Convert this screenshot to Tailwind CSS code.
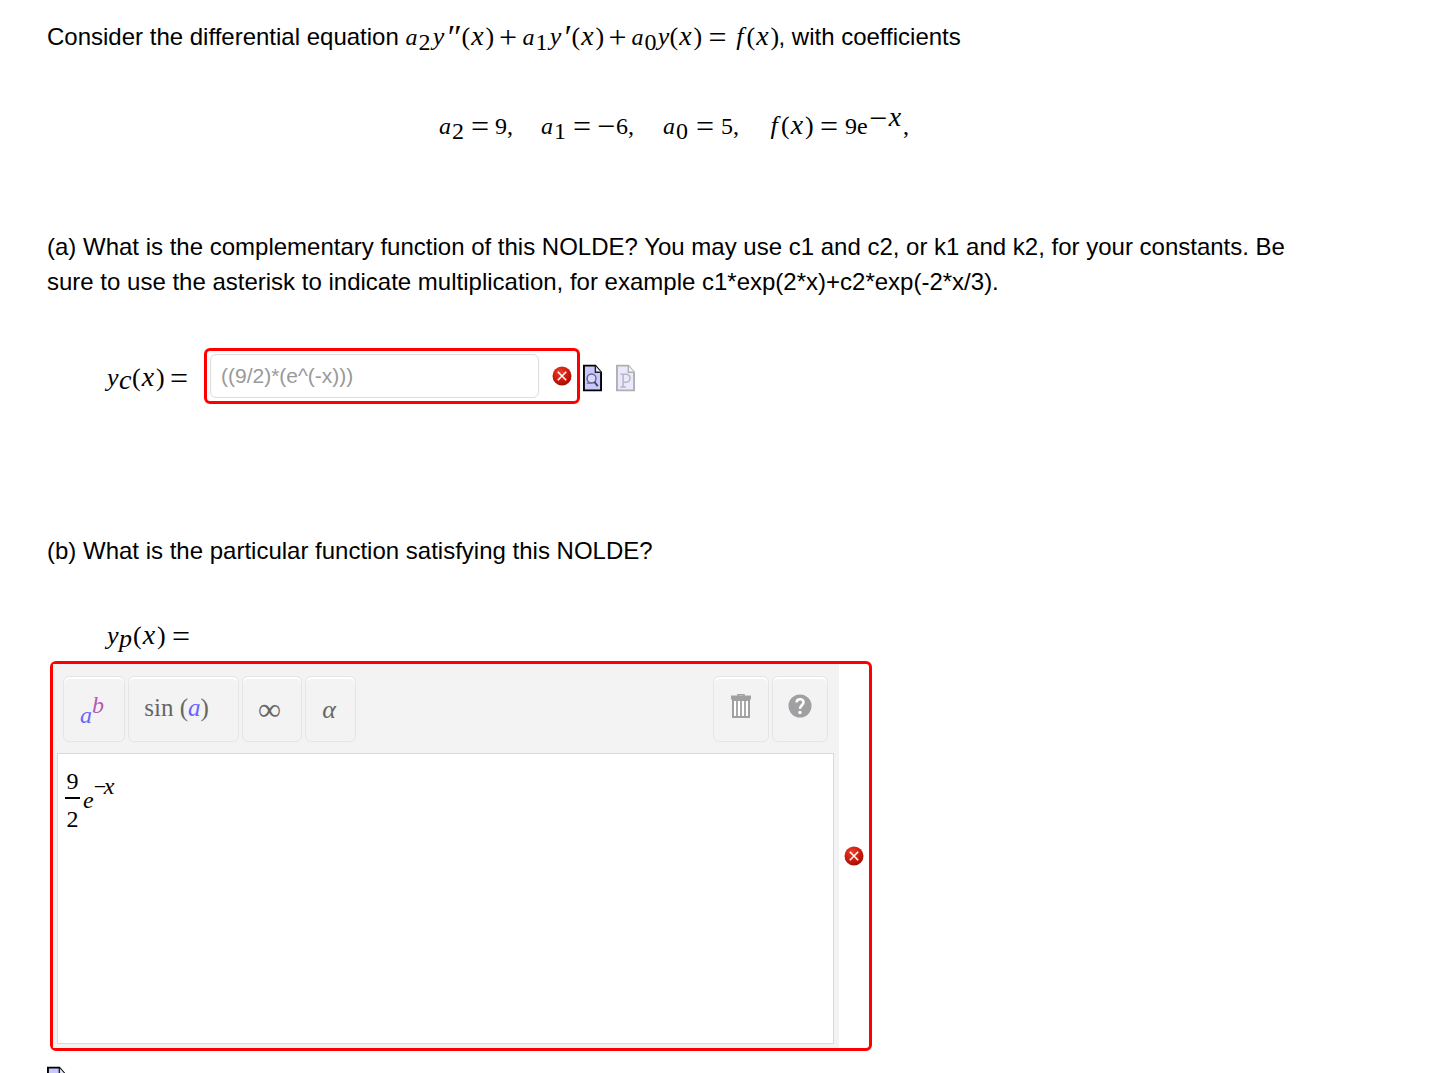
<!DOCTYPE html>
<html lang="en">
<head>
<meta charset="utf-8">
<meta name="viewport" content="width=device-width, initial-scale=1">
<title>Differential equation question</title>
<script src="https://cdn.jsdelivr.net/npm/@tailwindcss/browser@4"></script>
</head>
<body class="h-screen overflow-hidden bg-white font-['Liberation_Sans',Arial,sans-serif] text-[24px] leading-[35px] text-black">
<svg class="absolute h-0 w-0" aria-hidden="true">
  <defs>
    <radialGradient id="red" cx="40%" cy="30%" r="75%"><stop offset="0" stop-color="#e9402c"/><stop offset=".6" stop-color="#cc1808"/><stop offset="1" stop-color="#9b0c04"/></radialGradient>
    <symbol id="wrong" viewBox="0 0 20 20"><circle cx="10" cy="10" r="9.5" fill="url(#red)"/><path d="M5.8 5.8l8.4 8.4M14.2 5.8l-8.4 8.4" stroke="#fff" stroke-width="1.6"/></symbol>
    <symbol id="preview" viewBox="0 0 20 28"><path d="M1 1h12l6 7v19H1z" fill="#c8c8ff" stroke="#000" stroke-width="2"/><path d="M13 1v7h6" fill="#e8e8ff" stroke="#222" stroke-width="1.5"/><circle cx="9" cy="14.5" r="4.700" fill="#d8d8ff" stroke="#62628a" stroke-width="1.500"/><path d="M12 18l3.500 4.500" stroke="#44445e" stroke-width="2"/><path d="M4 19.500h5" stroke="#77779a" stroke-width="1.500"/></symbol>
  </defs>
</svg>
<main class="mr-[152px] ml-[47px] pt-[19px]">
  <p class="h-[35px] whitespace-nowrap">Consider the differential equation
    <span class="inline-flex items-baseline align-baseline font-['Liberation_Serif',serif] leading-[24px]"><i class="w-[13px]">a</i><span class="relative top-[5px] w-[13px]">2</span><i class="w-[14px] text-center text-[26px]">y</i><i class="relative top-[3px] w-[16px] text-[34px]">″</i><span class="w-[8px] text-[26px]">(</span><i class="w-[16px] text-center text-[28px]">x</i><span class="w-[8px] text-[26px]">)</span><span class="relative top-[3px] w-[29px] text-center text-[32px]">+</span><i class="w-[13px]">a</i><span class="relative top-[5px] w-[13px]">1</span><i class="w-[14px] text-center text-[26px]">y</i><i class="relative top-[3px] w-[9px] text-[34px]">′</i><span class="w-[8px] text-[26px]">(</span><i class="w-[16px] text-center text-[28px]">x</i><span class="w-[8px] text-[26px]">)</span><span class="relative top-[3px] w-[28px] text-center text-[32px]">+</span><i class="w-[13px]">a</i><span class="relative top-[5px] w-[13px]">0</span><i class="w-[12px] text-center text-[26px]">y</i><span class="w-[8px] text-[26px]">(</span><i class="w-[16px] text-center text-[28px]">x</i><span class="w-[8px] text-[26px]">)</span><span class="relative top-[3px] w-[32px] text-center text-[32px]">=</span><i class="w-[13px] text-center text-[26px]">f</i><span class="w-[8px] text-[26px]">(</span><i class="w-[16px] text-center text-[28px]">x</i><span class="w-[8px] text-[26px]">)</span></span>, with coefficients
  </p>

  <div class="mt-[57px] flex h-[31px] items-baseline justify-center font-['Liberation_Serif',serif] leading-[24px]"><i class="w-[13px]">a</i><span class="relative top-[5px] w-[13px]">2</span><span class="relative top-[3px] w-[30px] text-center text-[32px]">=</span><span class="w-[46px]">9,</span><i class="w-[13px]">a</i><span class="relative top-[5px] w-[13px]">1</span><span class="relative top-[3px] w-[30px] text-center text-[32px]">=</span><span class="relative top-[3px] w-[19px] text-[32px]">−</span><span class="w-[47px]">6,</span><i class="w-[13px]">a</i><span class="relative top-[5px] w-[13px]">0</span><span class="relative top-[3px] w-[32px] text-center text-[32px]">=</span><span class="w-[46px]">5,</span><i class="w-[14px] text-center text-[26px]">f</i><span class="w-[8px] text-[26px]">(</span><i class="w-[16px] text-center text-[28px]">x</i><span class="w-[8px] text-[26px]">)</span><span class="relative top-[3px] w-[32px] text-center text-[32px]">=</span><span class="w-[24px]">9e</span><span class="relative -top-[5px] w-[18px] text-[32px]">−</span><i class="relative -top-[8px] w-[16px] text-center text-[28px]">x</i><span class="w-[6px]">,</span></div>

  <p class="mt-[87px]">(a) What is the complementary function of this NOLDE? You may use c1 and c2, or k1 and k2, for your constants. Be sure to use the asterisk to indicate multiplication, for example c1*exp(2*x)+c2*exp(-2*x/3).</p>

  <div class="mt-[49px] ml-[60px] flex h-[56px] items-center">
    <label for="yc" class="flex w-[97px] items-baseline font-['Liberation_Serif',serif] leading-[24px]"><i class="w-[12px] text-[26px]">y</i><i class="relative top-[3px] w-[13px] text-[28px]">c</i><span class="w-[8px] text-[26px]">(</span><i class="w-[16px] text-center text-[28px]">x</i><span class="w-[8px] text-[26px]">)</span><span class="relative top-[3px] w-[30px] text-center text-[32px]">=</span></label>
    <div class="flex h-[56px] w-[376px] items-center justify-between rounded-[6px] border-3 border-[#ff0000] pr-[5px] pl-[3px]">
      <input id="yc" type="text" value="((9/2)*(e^(-x)))" class="h-[44px] w-[329px] rounded-[6px] border border-[#dddddd] bg-white px-[10px] text-[21px] text-[#999999]">
      <svg class="h-[20px] w-[20px]" role="img" aria-label="Incorrect"><use href="#wrong"/></svg>
    </div>
    <button class="ml-[3px] pt-[3px]" aria-label="Preview"><svg class="h-[28px] w-[19px]"><use href="#preview"/></svg></button>
    <button class="ml-[14px] pt-[3px]" aria-label="Plot"><svg class="h-[28px] w-[19px]" viewBox="0 0 20 28"><path d="M1 1h12l6 7v19H1z" fill="#e9e9fb" stroke="#b0b0b4" stroke-width="2"/><path d="M13 1v7h6" fill="#f5f5ff" stroke="#b0b0b4" stroke-width="1.500"/><path d="M4.500 10h6a4.200 4.200 0 0 1 0 8.500H8M7.500 10v13.500M4.500 23.500h6" fill="none" stroke="#b7b7c8" stroke-width="1.700"/></svg></button>
  </div>

  <p class="mt-[129px]">(b) What is the particular function satisfying this NOLDE?</p>

  <div class="mt-[53px] ml-[60px] flex h-[31px] items-baseline font-['Liberation_Serif',serif] leading-[24px]"><i class="w-[12px] text-[26px]">y</i><i class="relative top-[3px] w-[14px] text-[26px]">p</i><span class="w-[8px] text-[26px]">(</span><i class="w-[16px] text-center text-[28px]">x</i><span class="w-[8px] text-[26px]">)</span><span class="relative top-[3px] w-[32px] text-center text-[32px]">=</span></div>

  <section class="mt-[9px] ml-[3px] flex h-[390px] w-[822px] items-stretch rounded-[6px] border-3 border-[#ff0000]" aria-label="Equation editor">
    <div class="flex w-[786px] flex-col bg-[#f3f3f3] pr-[5px] pb-[4px] pl-[4px]">
      <div class="flex h-[89px] gap-[3px] px-[6px] pt-[12px] font-['Liberation_Serif',serif] text-[#666666]">
        <button class="flex h-[66px] w-[62px] items-center justify-center rounded-[6px] border border-[#e5e5e5] pr-[4px] shadow-[inset_0_2px_0_#fff]"><i class="relative top-[6px] text-[#6666ff]">a</i><i class="relative -top-[4px] text-[#b45cb4]">b</i></button>
        <button class="h-[66px] w-[111px] rounded-[6px] border border-[#e5e5e5] pr-[14px] pb-[4px] text-[25px] shadow-[inset_0_2px_0_#fff]">sin (<i class="text-[#6666ff]">a</i>)</button>
        <button class="h-[66px] w-[60px] rounded-[6px] border border-[#e5e5e5] pr-[5px] text-[32px] shadow-[inset_0_2px_0_#fff]">∞</button>
        <button class="h-[66px] w-[51px] rounded-[6px] border border-[#e5e5e5] pr-[3px] text-[26px] italic shadow-[inset_0_2px_0_#fff]">α</button>
        <button class="ml-auto flex h-[66px] w-[56px] items-center justify-center rounded-[6px] border border-[#e5e5e5] pb-[6px] shadow-[inset_0_2px_0_#fff]" aria-label="Clear"><svg class="h-[24px] w-[22px]" viewBox="0 0 22 24" fill="none" stroke="#a0a0a2"><path d="M8 2V.8h6V2" stroke-width="1.500"/><path d="M1 1.500h20v4H1z" fill="#a0a0a2" stroke="none"/><path d="M3 6h16v17H3z" fill="#fff" stroke-width="2"/><path d="M7 6v17M11 6v17M15 6v17" stroke-width="1.800"/></svg></button>
        <button class="flex h-[66px] w-[56px] items-center justify-center rounded-[6px] border border-[#e5e5e5] pb-[7px] shadow-[inset_0_2px_0_#fff]" aria-label="Help"><svg class="h-[24px] w-[24px]" viewBox="0 0 24 24"><circle cx="12" cy="12" r="11.500" fill="#a0a0a2"/><path d="M8.500 8.500c.3-4.300 7.500-4.200 7 0-.2 2.500-3.400 2.600-3.500 6.300" fill="none" stroke="#fff" stroke-width="2.600"/><circle cx="12" cy="18.500" r="1.700" fill="#fff"/></svg></button>
      </div>
      <div class="flex flex-1 items-start border border-[#d9d9d9] bg-white pt-[13px] pl-[7px] font-['Liberation_Serif',serif]">
        <span class="flex w-[15px] flex-col text-center leading-[28px]"><span class="h-[32px] border-b-2 border-black">9</span><span class="h-[34px] leading-[41px]">2</span></span>
        <i class="ml-[3px] pt-[16px]">e</i><span class="w-[10px] pt-[2px] text-[22px]">−</span><i class="pt-[2px]">x</i>
      </div>
    </div>
    <div class="flex flex-1 items-center justify-center"><svg class="h-[20px] w-[20px]" role="img" aria-label="Incorrect"><use href="#wrong"/></svg></div>
  </section>
  <button class="mt-[15px] block" aria-label="Preview"><svg class="h-[28px] w-[19px]"><use href="#preview"/></svg></button>
</main>
</body>
</html>
